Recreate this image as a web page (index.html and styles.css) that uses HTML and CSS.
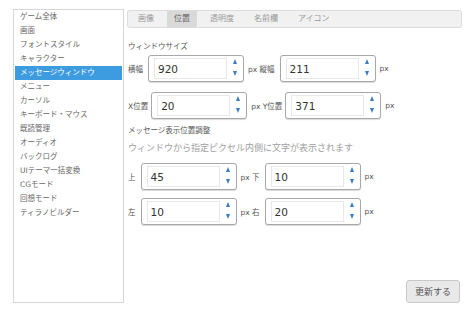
FILE: index.html
```html
<!DOCTYPE html>
<html lang="ja">
<head>
    <meta charset="UTF-8">
    <title>メッセージウィンドウ</title>
    <link rel="stylesheet" href="styles.css">
</head>
<body>
    <div class="app">
        <ul class="menu">
            <li>ゲーム全体</li>
            <li>画面</li>
            <li>フォントスタイル</li>
            <li>キャラクター</li>
            <li class="active">メッセージウィンドウ</li>
            <li>メニュー</li>
            <li>カーソル</li>
            <li>キーボード・マウス</li>
            <li>既読管理</li>
            <li>オーディオ</li>
            <li>バックログ</li>
            <li>UIテーマ一括変換</li>
            <li>CGモード</li>
            <li>回想モード</li>
            <li>ティラノビルダー</li>
        </ul>
        <div class="main">
            <div class="tabs">
                <span class="tab">画像</span>
                <span class="tab active">位置</span>
                <span class="tab">透明度</span>
                <span class="tab">名前欄</span>
                <span class="tab">アイコン</span>
            </div>

            <div class="caption caption-size">ウィンドウサイズ</div>
            <div class="row row-first">
                <span class="label">横幅</span>
                <div class="num"><input class="num-field" value="920"><span class="arrows"><i class="up"></i><i class="down"></i></span></div>
                <span class="label">px 縦幅</span>
                <div class="num"><input class="num-field" value="211"><span class="arrows"><i class="up"></i><i class="down"></i></span></div>
                <span class="label">px</span>
            </div>
            <div class="row">
                <span class="label">X位置</span>
                <div class="num num-tight"><input class="num-field" value="20"><span class="arrows"><i class="up"></i><i class="down"></i></span></div>
                <span class="label">px Y位置</span>
                <div class="num num-tight"><input class="num-field" value="371"><span class="arrows"><i class="up"></i><i class="down"></i></span></div>
                <span class="label">px</span>
            </div>

            <div class="caption caption-margin">メッセージ表示位置調整</div>
            <div class="desc">ウィンドウから指定ピクセル内側に文字が表示されます</div>
            <div class="row row-margin">
                <span class="label">上</span>
                <div class="num"><input class="num-field" value="45"><span class="arrows"><i class="up"></i><i class="down"></i></span></div>
                <span class="label">px 下</span>
                <div class="num"><input class="num-field" value="10"><span class="arrows"><i class="up"></i><i class="down"></i></span></div>
                <span class="label">px</span>
            </div>
            <div class="row row-margin">
                <span class="label">左</span>
                <div class="num"><input class="num-field" value="10"><span class="arrows"><i class="up"></i><i class="down"></i></span></div>
                <span class="label">px 右</span>
                <div class="num"><input class="num-field" value="20"><span class="arrows"><i class="up"></i><i class="down"></i></span></div>
                <span class="label">px</span>
            </div>

            <button class="update">更新する</button>
        </div>
    </div>
</body>
</html>
```
FILE: styles.css
```css
*{
    margin: 0;
    padding: 0;
    box-sizing: border-box;
}
body {
    font-family: "DejaVu Sans", "Noto Sans CJK JP", sans-serif;
    color: #555;
    background-color: #fff;
}
.app {
    display: flex;
    height: 312px;
    padding: 9px 12px 9px 13px;
}
/* 左のメニュー */
.menu {
    width: 111px;
    height: 294px;
    list-style: none;
    padding: 0 1px;
    border: 1px solid #d6d6d6;
    font-size: 7.5px;
}
.menu li {
    height: 14px;
    line-height: 14px;
    padding-left: 5px;
    color: #666;
    white-space: nowrap;
}
.menu li.active {
    background-color: #3d9be0;
    color: #fff;
}
.main {
    flex: 1;
    margin-left: 3px;
    display: flex;
    flex-direction: column;
}
.tabs {
    display: flex;
    gap: 6px;
    height: 18px;
    margin-top: 1px;
    padding: 0 3px;
    background-color: #f1f1f1;
    border: 1px solid #dcdcdc;
    border-radius: 3px;
    font-size: 8px;
}
.tab {
    padding: 0 7px;
    line-height: 16px;
    color: #9a9a9a;
}
.tab.active {
    background-color: #d9d9d9;
    color: #666;
}
.caption {
    font-size: 7.5px;
    line-height: 12px;
    padding-left: 1px;
}
.caption-size {
    margin-top: 13px;
}
.caption-margin {
    margin-top: 6px;
}
.desc {
    margin-top: 4px;
    font-size: 9px;
    line-height: 14px;
    color: #a0a0a0;
    padding-left: 1px;
    white-space: nowrap;
}
.row {
    display: flex;
    align-items: center;
    padding-left: 1px;
    margin-top: 10px;
    font-size: 7.5px;
}
.row-first {
    margin-top: 2px;
}
.row-margin {
    margin-top: 8px;
}
.label {
    white-space: nowrap;
}
/* 数値入力 */
.num {
    display: flex;
    width: 96px;
    height: 27px;
    margin: 0 4px 0 5px;
    padding: 2px 0 2px 5px;
    border: 1px solid #a8a8a8;
    border-radius: 3px;
    box-shadow: 0 1px 1px rgba(0, 0, 0, .15);
    background-color: #fff;
}
.num-tight {
    margin-left: 3px;
}
.num-field {
    width: 73px;
    height: 100%;
    padding-left: 3px;
    border: 1px solid #e8e8e8;
    font-family: "DejaVu Sans", sans-serif;
    font-size: 10.5px;
    color: #333;
    outline: none;
}
.arrows {
    flex: 1;
    display: flex;
    flex-direction: column;
    align-items: center;
    padding-top: 1px;
}
.arrows i {
    width: 0;
    height: 0;
    border-left: 2.5px solid transparent;
    border-right: 2.5px solid transparent;
}
.arrows .up {
    border-bottom: 5px solid #3a7cc4;
}
.arrows .down {
    margin-top: 7px;
    border-top: 5px solid #3a7cc4;
}
.update {
    margin-top: auto;
    align-self: flex-end;
    margin-right: 2px;
    width: 54px;
    height: 23px;
    border: 1px solid #c8c8c8;
    border-radius: 3px;
    background-color: #e9e9e9;
    font-family: "Noto Sans CJK JP", sans-serif;
    font-size: 9px;
    color: #555;
}
```
